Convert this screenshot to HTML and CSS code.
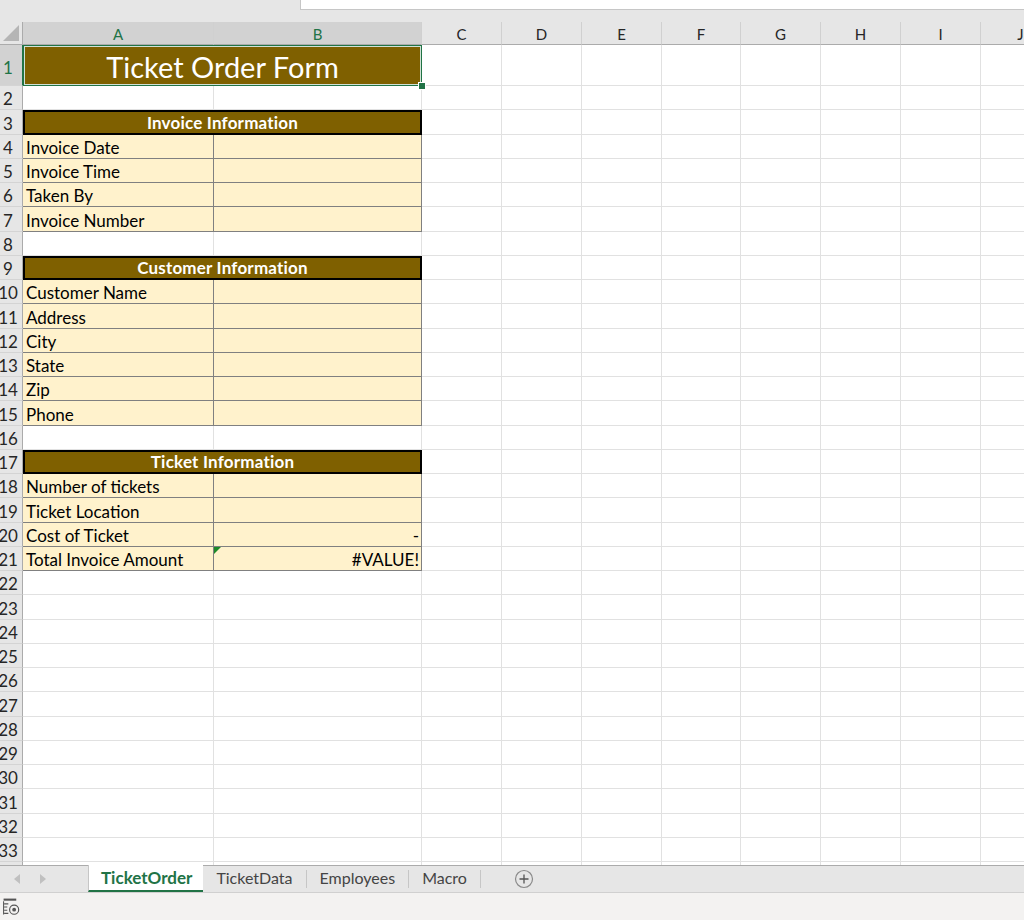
FILE: index.html
```html
<!DOCTYPE html>
<html lang="en">
<head>
    <meta charset="UTF-8">
    <meta name="viewport" content="width=device-width, initial-scale=1.0">
    <title>TicketOrder</title>
    <link rel="stylesheet" href="styles.css">
</head>
<body>
    <div class="app">
        <div class="top-band">
            <div class="formula-box"></div>
        </div>

        <div class="sheet" id="sheet"></div>

        <div class="tab-bar">
            <div class="tab-nav">
                <span class="nav-arrow left"></span>
                <span class="nav-arrow right"></span>
            </div>
            <div class="tab active">TicketOrder</div>
            <div class="tab">TicketData</div>
            <div class="tab">Employees</div>
            <div class="tab">Macro</div>
            <div class="add-sheet">
                <svg width="20" height="20" viewBox="0 0 20 20">
                    <circle cx="10" cy="10" r="8.5" fill="none" stroke="#8a8a8a" stroke-width="1.2"/>
                    <path d="M10 5.5v9M5.5 10h9" stroke="#555" stroke-width="1.3"/>
                </svg>
            </div>
        </div>

        <div class="status-bar">
            <svg class="macro-icon" width="17" height="19" viewBox="0 0 16 18">
                <rect x="0.5" y="1.5" width="12" height="2" fill="#555"/>
                <path d="M1 6.5h4M1 9.5h3M1 12.5h3M1 15.5h4" stroke="#555" stroke-width="1"/>
                <path d="M0.5 4v12.5" stroke="#555" stroke-width="1"/>
                <circle cx="10.5" cy="12" r="4.3" fill="#f3f2f1" stroke="#555" stroke-width="1.1"/>
                <circle cx="10.5" cy="12" r="1.8" fill="#555"/>
            </svg>
        </div>
    </div>

    <script>
        const columns = ["A", "B", "C", "D", "E", "F", "G", "H", "I", "J"];
        const totalRows = 34;

        const form = [
            { kind: "title", text: "Ticket Order Form" },
            { kind: "blank" },
            { kind: "section", text: "Invoice Information" },
            { kind: "field", label: "Invoice Date" },
            { kind: "field", label: "Invoice Time" },
            { kind: "field", label: "Taken By" },
            { kind: "field", label: "Invoice Number" },
            { kind: "blank" },
            { kind: "section", text: "Customer Information" },
            { kind: "field", label: "Customer Name" },
            { kind: "field", label: "Address" },
            { kind: "field", label: "City" },
            { kind: "field", label: "State" },
            { kind: "field", label: "Zip" },
            { kind: "field", label: "Phone" },
            { kind: "blank" },
            { kind: "section", text: "Ticket Information" },
            { kind: "field", label: "Number of tickets" },
            { kind: "field", label: "Ticket Location" },
            { kind: "field", label: "Cost of Ticket", value: "-" },
            { kind: "field", label: "Total Invoice Amount", value: "#VALUE!", error: true }
        ];

        function cell(className, text) {
            const div = document.createElement("div");
            div.className = className;
            if (text) {
                const span = document.createElement("span");
                span.textContent = text;
                div.appendChild(span);
            }
            return div;
        }

        function buildSheet() {
            const sheet = document.getElementById("sheet");
            sheet.appendChild(cell("corner"));

            columns.forEach((col, i) => {
                sheet.appendChild(cell(i < 2 ? "col-head selected" : "col-head", col));
            });

            for (let r = 1; r <= totalRows; r++) {
                const row = form[r - 1] || { kind: "blank" };
                sheet.appendChild(cell(r === 1 ? "row-head selected" : "row-head", String(r)));

                if (row.kind === "title") {
                    const title = cell("cell title", row.text);
                    title.appendChild(cell("fill-handle"));
                    sheet.appendChild(title);
                } else if (row.kind === "section") {
                    sheet.appendChild(cell("cell section", row.text));
                } else if (row.kind === "field") {
                    sheet.appendChild(cell("cell field label", row.label));
                    const value = cell("cell field value", row.value);
                    if (row.error) {
                        value.appendChild(cell("error-mark"));
                    }
                    sheet.appendChild(value);
                } else {
                    sheet.appendChild(cell("cell"));
                    sheet.appendChild(cell("cell"));
                }

                for (let c = 2; c < columns.length; c++) {
                    sheet.appendChild(cell("cell"));
                }
            }
        }

        buildSheet();
    </script>
</body>
</html>
```

FILE: styles.css
```css
* {
    box-sizing: border-box;
}

body {
    margin: 0;
    font-family: Lato, "Liberation Sans", sans-serif;
    background-color: #ffffff;
    overflow: hidden;
}

.app {
    display: flex;
    flex-direction: column;
    width: 1024px;
    height: 920px;
}

/* top strip, bottom of the formula bar */
.top-band {
    height: 22px;
    background-color: #e6e6e6;
    padding-left: 300px;
    flex-shrink: 0;
}

.formula-box {
    height: 10px;
    background-color: #ffffff;
    border-left: 1px solid #c6c6c6;
    border-bottom: 1px solid #c6c6c6;
}

/* grid */
.sheet {
    height: 843px;
    flex-shrink: 0;
    display: grid;
    grid-template-columns: 23px 191px 208px 80px 80px 80px 79px 80px 80px 80px 80px;
    grid-template-rows: 23px 41px;
    grid-auto-rows: 24.25px;
    align-content: start;
    overflow: hidden;
    background-color: #ffffff;
}

.corner {
    background-color: #e6e6e6;
    border-right: 1px solid #ababab;
    border-bottom: 1px solid #ababab;
    display: flex;
    justify-content: flex-end;
    align-items: flex-end;
    padding: 0 3px 3px 0;
}

.corner::after {
    content: "";
    width: 0;
    height: 0;
    border-left: 16px solid transparent;
    border-bottom: 16px solid #b5b5b5;
}

.col-head {
    background-color: #e6e6e6;
    border-right: 1px solid #d0d0d0;
    border-bottom: 1px solid #ababab;
    display: flex;
    justify-content: center;
    align-items: center;
    padding-top: 2px;
    font-size: 15px;
    color: #262626;
}

.row-head {
    background-color: #e6e6e6;
    border-right: 1px solid #ababab;
    border-bottom: 1px solid #d4d4d4;
    display: flex;
    justify-content: center;
    align-items: flex-end;
    padding: 0 6px 0 0;
    font-size: 17px;
    color: #262626;
    overflow: hidden;
    white-space: nowrap;
}

.col-head.selected,
.row-head.selected {
    background-color: #d2d2d2;
    color: #217346;
}

.row-head.selected {
    border-right-color: #217346;
    align-items: center;
    padding-top: 4px;
}

.cell {
    border-right: 1px solid #e1e1e1;
    border-bottom: 1px solid #e1e1e1;
    display: flex;
    align-items: flex-end;
    padding: 0 3px;
    font-size: 17px;
    color: #000000;
    white-space: nowrap;
    position: relative;
}

.title {
    grid-column: span 2;
    background-color: #7f6000;
    color: #ffffff;
    font-size: 29px;
    justify-content: center;
    align-items: center;
    padding-top: 2px;
    border: 1px solid #217346;
    box-shadow: inset 0 0 0 1px #cfe2d6;
}

.fill-handle {
    position: absolute;
    right: -5px;
    bottom: -5px;
    width: 8px;
    height: 8px;
    background-color: #217346;
    border: 1px solid #ffffff;
    z-index: 2;
}

.section {
    grid-column: span 2;
    background-color: #7f6000;
    color: #ffffff;
    font-weight: bold;
    letter-spacing: 0.2px;
    justify-content: center;
    border: 2px solid #000000;
}

.field {
    background-color: #fff2cc;
    border-right-color: #808080;
    border-bottom-color: #808080;
}

.field.value {
    justify-content: flex-end;
    padding-right: 2px;
}

.error-mark {
    position: absolute;
    top: 0;
    left: 0;
    width: 0;
    height: 0;
    border-top: 7px solid #1e8a2a;
    border-right: 7px solid transparent;
}

/* sheet tabs */
.tab-bar {
    height: 28px;
    flex-shrink: 0;
    display: flex;
    background-color: #e6e6e6;
    border-top: 1px solid #ababab;
    border-bottom: 1px solid #d0d0d0;
    font-size: 16px;
}

.tab-nav {
    width: 88px;
    display: flex;
    align-items: center;
    gap: 20px;
    padding-left: 14px;
}

.nav-arrow {
    width: 0;
    height: 0;
    border-top: 5px solid transparent;
    border-bottom: 5px solid transparent;
}

.nav-arrow.left {
    border-right: 6px solid #c0c0c0;
}

.nav-arrow.right {
    border-left: 6px solid #c0c0c0;
}

.tab {
    display: flex;
    align-items: center;
    padding: 0 13px 3px;
    color: #444444;
    margin: 4px 0;
    border-right: 1px solid #c6c6c6;
}

.tab.active {
    margin: 0;
    margin-top: -1px;
    padding: 0 11px 0 12px;
    background-color: #ffffff;
    color: #217346;
    font-size: 17px;
    font-weight: bold;
    border-left: 1px solid #c6c6c6;
    border-right: none;
    border-bottom: 2px solid #217346;
}

.add-sheet {
    display: flex;
    align-items: center;
    margin-left: 33px;
}

.status-bar {
    flex: 1;
    background-color: #f3f2f1;
    display: flex;
    align-items: center;
    padding-left: 3px;
}
```
